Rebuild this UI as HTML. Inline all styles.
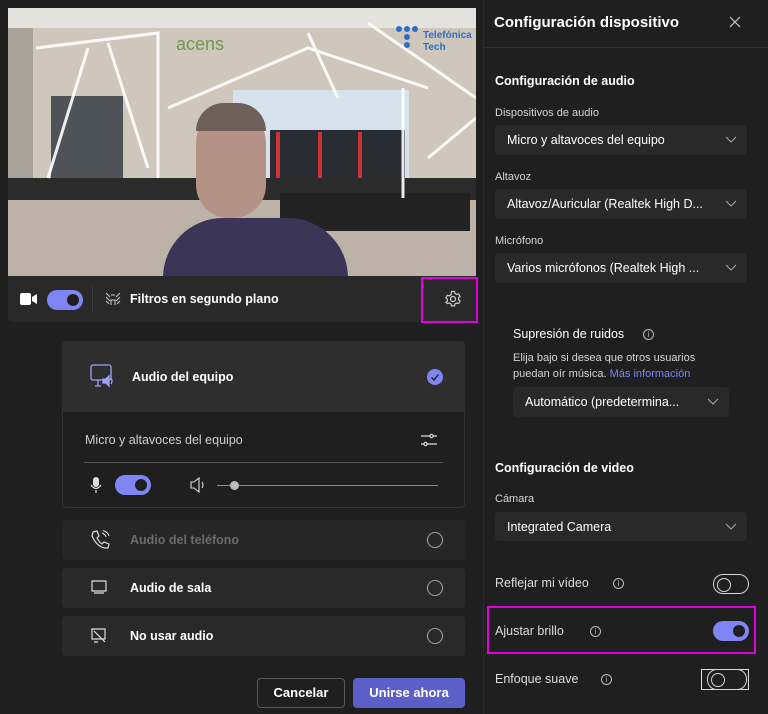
<!DOCTYPE html>
<html><head><meta charset="utf-8"><style>
*{margin:0;padding:0;box-sizing:border-box}
body{width:768px;height:714px;background:#1f1f1f;font-family:"Liberation Sans",sans-serif;color:#fff;position:relative;overflow:hidden}
.a{position:absolute}
.card{position:absolute;background:#292929;border-radius:4px}
.t{position:absolute;font-size:12.5px;white-space:nowrap}
.b{font-weight:bold}
.dd{position:absolute;background:#292929;border-radius:4px;height:30px;font-size:12.5px;padding:8px 12px;color:#fff;white-space:nowrap}
.dd svg{position:absolute;right:10px;top:11px}
.lbl{position:absolute;font-size:11px;color:#d6d6d6}
.tog{position:absolute;width:36px;height:20px;border-radius:10px;background:#7f85f5}
.tog:after{content:"";position:absolute;right:4px;top:4px;width:12px;height:12px;border-radius:50%;background:#1f1f1f}
.toff{position:absolute;width:36px;height:20px;border-radius:10px;border:1px solid #d6d6d6}
.toff:after{content:"";position:absolute;left:3px;top:3px;width:12px;height:12px;border-radius:50%;border:1px solid #d6d6d6}
.info{position:absolute;width:11px;height:11px;border:1px solid #bbb;border-radius:50%;font-size:8px;color:#bbb;text-align:center;line-height:9px}
.rad{position:absolute;width:16px;height:16px;border:1px solid #aaa;border-radius:50%}
</style></head><body>
<!-- video -->
<div class="a" style="left:8px;top:8px;width:468px;height:268px;overflow:hidden;background:#cfc7bc">
 <div class="a" style="left:0;top:0;width:468px;height:20px;background:#e4e2de"></div>
 <div class="a" style="left:0;top:20px;width:25px;height:180px;background:#a9a39b"></div>
 <div class="a" style="left:43px;top:88px;width:72px;height:85px;background:#4e5358"></div>
 <div class="a" style="left:225px;top:82px;width:176px;height:110px;background:#d6e2ec"></div>
 <div class="a" style="left:262px;top:122px;width:135px;height:62px;background:#2a2c33"></div>
 <div class="a" style="left:268px;top:124px;width:4px;height:55px;background:#c33"></div>
 <div class="a" style="left:310px;top:124px;width:4px;height:55px;background:#c33"></div>
 <div class="a" style="left:350px;top:124px;width:4px;height:55px;background:#c33"></div>
 <div class="a" style="left:0;top:170px;width:468px;height:30px;background:#2b2b2b"></div>
 <div class="a" style="left:0;top:192px;width:468px;height:76px;background:#bcb2a8"></div>
 <div class="a" style="left:272px;top:185px;width:190px;height:38px;background:#222"></div>
 <svg class="a" style="left:0;top:0" width="468" height="200"><g stroke="#fff" stroke-width="3" fill="none" opacity=".9"><path d="M28 40 L150 25 L150 170"/><path d="M100 35 L140 160"/><path d="M80 40 L40 170"/><path d="M160 100 L300 40 L420 80"/><path d="M300 25 L330 90"/><path d="M360 15 L468 90"/><path d="M420 150 L468 110"/><path d="M395 80 L395 190"/></g>
 <text x="168" y="42" fill="#6c9a4c" font-family="Liberation Sans" font-size="18">acens</text>
 <text x="415" y="30" fill="#2b6fc4" font-family="Liberation Sans" font-size="10" font-weight="bold">Telefónica</text>
 <text x="415" y="42" fill="#2b6fc4" font-family="Liberation Sans" font-size="10" font-weight="bold">Tech</text>
 <g fill="#2b6fc4"><circle cx="391" cy="21" r="3"/><circle cx="399" cy="21" r="3"/><circle cx="407" cy="21" r="3"/><circle cx="399" cy="29" r="3"/><circle cx="399" cy="37" r="3"/></g></svg>
 <div class="a" style="left:155px;top:210px;width:185px;height:80px;border-radius:60px 60px 0 0;background:#3b3558"></div>
 <div class="a" style="left:188px;top:100px;width:70px;height:110px;border-radius:36px 36px 34px 34px;background:#b49386"></div>
 <div class="a" style="left:188px;top:95px;width:70px;height:28px;border-radius:36px 36px 0 0;background:#6e5f58"></div>
</div>
<div class="card" style="left:8px;top:276px;width:468px;height:46px;border-radius:0 0 4px 4px"></div>
<svg class="a" style="left:20px;top:292px" width="18" height="14"><rect x="0" y="1" width="11" height="12" rx="2" fill="#fff"/><path d="M12 5 L17 2 V12 L12 9Z" fill="#fff"/></svg>
<div class="tog" style="left:47px;top:290px"></div>
<div class="a" style="left:92px;top:285px;width:1px;height:28px;background:#3a3a3a"></div>
<svg class="a" style="left:105px;top:292px" width="16" height="14"><g stroke="#ccc" stroke-width="1" fill="none"><path d="M1 1 L5 5 M1 5 L5 9 M1 9 L4 12 M15 1 L11 5 M15 5 L11 9 M15 9 L12 12 M6 3 H10 M6 13 V8 H10 V13"/></g></svg>
<div class="t b" style="left:130px;top:292px">Filtros en segundo plano</div>
<div class="a" style="left:421px;top:277px;width:57px;height:46px;border:2px solid #e000e0"></div>
<svg class="a" style="left:444px;top:290px" width="18" height="18" viewBox="0 0 18 18"><g fill="none" stroke="#ccc" stroke-width="1.2"><circle cx="9" cy="9" r="2.5"/><path d="M7.5 1.5h3l.5 2 1.6.9 2-.6 1.5 2.6-1.5 1.4v1.8l1.5 1.4-1.5 2.6-2-.6-1.6.9-.5 2h-3l-.5-2-1.6-.9-2 .6L1.9 12.4l1.5-1.4V9.2L1.9 7.8 3.4 5.2l2 .6L7 4.9z"/></g></svg>

<!-- audio card -->
<div class="a" style="left:62px;top:341px;width:403px;height:167px;border:1px solid #333;border-radius:4px;background:#1f1f1f"></div>
<div class="a" style="left:62px;top:341px;width:403px;height:71px;background:#2e2e2e;border-radius:4px 4px 0 0"></div>
<svg class="a" style="left:90px;top:364px" width="26" height="24"><g stroke="#9ea2ff" stroke-width="1.3" fill="none"><rect x="1" y="1" width="20" height="15" rx="2"/><path d="M5 22 H11 M8 16 V22"/><path d="M13 15 L16 15 L19 12 V22 L16 19 H13Z" fill="#9ea2ff"/><path d="M21 14 Q23 17 21 20"/></g></svg>
<div class="t b" style="left:132px;top:370px">Audio del equipo</div>
<div class="a" style="left:427px;top:369px;width:16px;height:16px;border-radius:50%;background:#7f85f5"></div>
<svg class="a" style="left:427px;top:369px" width="16" height="16"><path d="M4.5 8.5 L7 11 L11.5 5.5" stroke="#2e2e2e" stroke-width="1.6" fill="none"/></svg>
<div class="t" style="left:85px;top:433px;color:#cfcfcf">Micro y altavoces del equipo</div>
<svg class="a" style="left:420px;top:432px" width="18" height="16"><g stroke="#ddd" stroke-width="1.2" fill="none"><path d="M1 4 H10 M13 4 H17 M1 12 H4 M7 12 H17"/><circle cx="11.5" cy="4" r="1.6"/><circle cx="5.5" cy="12" r="1.6"/></g></svg>
<div class="a" style="left:84px;top:462px;width:359px;height:1px;background:#555"></div>
<svg class="a" style="left:90px;top:476px" width="12" height="18"><rect x="3" y="1" width="6" height="10" rx="3" fill="#ddd"/><path d="M1 9 Q6 16 11 9 M6 14 V17" stroke="#ddd" stroke-width="1.2" fill="none"/></svg>
<div class="tog" style="left:115px;top:475px"></div>
<svg class="a" style="left:190px;top:477px" width="16" height="16"><path d="M1 5 H4 L9 1 V15 L4 11 H1Z M12 5 Q14 8 12 11" stroke="#ddd" stroke-width="1.1" fill="none"/></svg>
<div class="a" style="left:217px;top:485px;width:221px;height:1px;background:#888"></div>
<div class="a" style="left:217px;top:485px;width:18px;height:1px;background:#7f85f5"></div>
<div class="a" style="left:230px;top:481px;width:9px;height:9px;border-radius:50%;background:#bbb"></div>

<div class="card" style="left:62px;top:520px;width:403px;height:40px;background:#262626"></div>
<svg class="a" style="left:90px;top:530px" width="20" height="20"><path d="M3 2 L7 1 L9 6 L7 8 Q9 12 12 14 L14 12 L19 14 L18 18 Q8 19 2 6Z" stroke="#ddd" stroke-width="1.2" fill="none"/><path d="M12 3 Q15 4 16 7 M13 0.5 Q18 2 19 6" stroke="#ddd" fill="none"/></svg>
<div class="t b" style="left:130px;top:533px;color:#6b6b6b">Audio del teléfono</div>
<div class="rad" style="left:427px;top:532px"></div>
<div class="card" style="left:62px;top:568px;width:403px;height:40px"></div>
<svg class="a" style="left:90px;top:579px" width="18" height="18"><path d="M2 2 H16 V12 H2Z M4 14 H14" stroke="#ddd" stroke-width="1.2" fill="none" stroke-linejoin="round"/></svg>
<div class="t b" style="left:130px;top:581px">Audio de sala</div>
<div class="rad" style="left:427px;top:580px"></div>
<div class="card" style="left:62px;top:616px;width:403px;height:40px"></div>
<svg class="a" style="left:90px;top:627px" width="18" height="18"><path d="M2 2 H15 V12 H2Z M4 15 H8 M4 4 L15 15" stroke="#ddd" stroke-width="1.2" fill="none"/></svg>
<div class="t b" style="left:130px;top:629px">No usar audio</div>
<div class="rad" style="left:427px;top:628px"></div>

<div class="a" style="left:257px;top:678px;width:88px;height:30px;border:1px solid #5a5a5a;border-radius:4px;background:#1f1f1f;font-size:13px;font-weight:bold;text-align:center;line-height:28px">Cancelar</div>
<div class="a" style="left:353px;top:678px;width:112px;height:30px;border-radius:4px;background:#5b5fc7;font-size:13px;font-weight:bold;text-align:center;line-height:30px">Unirse ahora</div>

<!-- right panel -->
<div class="a" style="left:483px;top:0;width:1px;height:714px;background:#2b2b2b"></div>
<div class="a" style="left:484px;top:0;width:284px;height:714px;background:#1f1f1f"></div>
<div class="t b" style="left:494px;top:14px;font-size:15px">Configuración dispositivo</div>
<svg class="a" style="left:729px;top:16px" width="12" height="12"><path d="M1 1 L11 11 M11 1 L1 11" stroke="#ccc" stroke-width="1.2"/></svg>
<div class="a" style="left:484px;top:47px;width:284px;height:1px;background:#2e2e2e"></div>
<div class="t b" style="left:495px;top:74px">Configuración de audio</div>
<div class="lbl" style="left:495px;top:107px">Dispositivos de audio</div>
<div class="dd" style="left:495px;top:125px;width:252px">Micro y altavoces del equipo<svg width="12" height="8"><path d="M1 1 L6 6 L11 1" stroke="#aaa" fill="none"/></svg></div>
<div class="lbl" style="left:495px;top:171px">Altavoz</div>
<div class="dd" style="left:495px;top:189px;width:252px">Altavoz/Auricular (Realtek High D...<svg width="12" height="8"><path d="M1 1 L6 6 L11 1" stroke="#aaa" fill="none"/></svg></div>
<div class="lbl" style="left:495px;top:235px">Micrófono</div>
<div class="dd" style="left:495px;top:253px;width:252px">Varios micrófonos (Realtek High ...<svg width="12" height="8"><path d="M1 1 L6 6 L11 1" stroke="#aaa" fill="none"/></svg></div>
<div class="t" style="left:513px;top:327px">Supresión de ruidos</div>
<div class="info" style="left:643px;top:329px">i</div>
<div class="lbl" style="left:513px;top:350px;line-height:16px;color:#d6d6d6">Elija bajo si desea que otros usuarios<br>puedan oír música. <span style="color:#7f85f5">Más información</span></div>
<div class="dd" style="left:513px;top:387px;width:216px">Automático (predetermina...<svg width="12" height="8"><path d="M1 1 L6 6 L11 1" stroke="#aaa" fill="none"/></svg></div>
<div class="t b" style="left:495px;top:461px">Configuración de video</div>
<div class="lbl" style="left:495px;top:493px">Cámara</div>
<div class="dd" style="left:495px;top:512px;width:252px;height:29px">Integrated Camera<svg width="12" height="8"><path d="M1 1 L6 6 L11 1" stroke="#aaa" fill="none"/></svg></div>
<div class="t" style="left:495px;top:576px;color:#ddd">Reflejar mi vídeo</div>
<div class="info" style="left:613px;top:578px">i</div>
<div class="toff" style="left:713px;top:574px"></div>
<div class="a" style="left:487px;top:606px;width:269px;height:48px;border:2px solid #e000e0"></div>
<div class="t" style="left:495px;top:624px;color:#ddd">Ajustar brillo</div>
<div class="info" style="left:590px;top:626px">i</div>
<div class="tog" style="left:713px;top:621px"></div>
<div class="t" style="left:495px;top:672px;color:#ddd">Enfoque suave</div>
<div class="info" style="left:601px;top:674px">i</div>
<div class="a" style="left:701px;top:669px;width:48px;height:21px;border:1px solid #ddd"></div>
<div class="toff" style="left:707px;top:669px;width:40px;height:21px"></div>
</body></html>
